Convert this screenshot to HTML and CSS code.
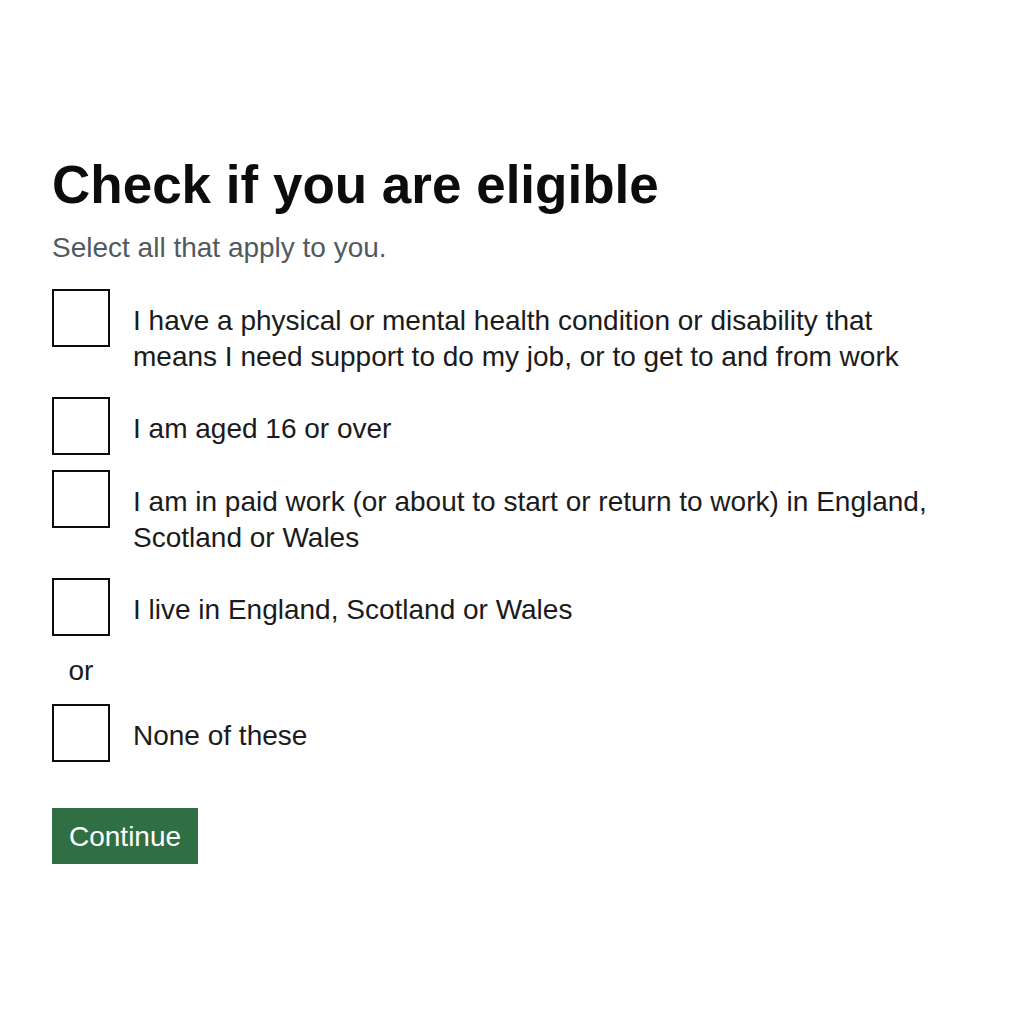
FILE: index.html
```html
<!DOCTYPE html>
<html lang="en">
<head>
    <meta charset="UTF-8">
    <meta name="viewport" content="width=device-width, initial-scale=1.0">
    <title>Check if you are eligible</title>
    <link rel="stylesheet" href="styles.css">
</head>
<body>
    <main class="page">
        <form class="eligibility">
            <h1 class="heading">Check if you are eligible</h1>
            <p class="hint">Select all that apply to you.</p>

            <div class="checkboxes">
                <div class="checkbox-item">
                    <input type="checkbox" class="checkbox-input" id="condition">
                    <label class="checkbox-label" for="condition">I have a physical or mental health condition or disability that means I need support to do my job, or to get to and from work</label>
                </div>
                <div class="checkbox-item">
                    <input type="checkbox" class="checkbox-input" id="age">
                    <label class="checkbox-label" for="age">I am aged 16 or over</label>
                </div>
                <div class="checkbox-item">
                    <input type="checkbox" class="checkbox-input" id="work">
                    <label class="checkbox-label" for="work">I am in paid work (or about to start or return to work) in England, Scotland or Wales</label>
                </div>
                <div class="checkbox-item">
                    <input type="checkbox" class="checkbox-input" id="live">
                    <label class="checkbox-label" for="live">I live in England, Scotland or Wales</label>
                </div>
                <div class="divider">or</div>
                <div class="checkbox-item">
                    <input type="checkbox" class="checkbox-input" id="none">
                    <label class="checkbox-label" for="none">None of these</label>
                </div>
            </div>

            <button type="submit" class="button">Continue</button>
        </form>
    </main>
</body>
</html>
```

FILE: styles.css
```css
body {
    margin: 0;
    background: #fff;
    color: #0b0c0c;
    font-family: "Liberation Sans", Arial, sans-serif;
}
.page {
    padding: 153px 52px 0;
}
.eligibility {
    max-width: 900px;
}
.heading {
    margin: 0 0 13px;
    font-size: 53px;
    line-height: 64px;
    font-weight: 700;
}
.hint {
    margin: 0 0 23px;
    font-size: 28px;
    line-height: 36px;
    color: #505a5f;
}
.checkboxes {
    display: flex;
    flex-direction: column;
    gap: 15px;
}
.checkbox-item {
    display: flex;
    align-items: flex-start;
    min-height: 58px;
}
.checkbox-input {
    appearance: none;
    flex: none;
    width: 58px;
    height: 58px;
    margin: 0;
    border: 2px solid #0b0c0c;
    background: #fff;
    box-sizing: border-box;
    cursor: pointer;
}
.checkbox-label {
    padding: 14px 22px 7px 23px;
    color: #1b1b1b;
    font-size: 28px;
    line-height: 36px;
    cursor: pointer;
}
.divider {
    width: 58px;
    color: #1b1b1b;
    font-size: 28px;
    line-height: 36px;
    text-align: center;
    margin-top: 2px;
}
.button {
    margin-top: 46px;
    padding: 12px 15px 11px;
    border: 2px solid transparent;
    background: #2f6f43;
    box-shadow: 0 3px 0 #163b22;
    color: #fff;
    font-family: inherit;
    font-size: 28px;
    line-height: 29px;
    cursor: pointer;
}
```
